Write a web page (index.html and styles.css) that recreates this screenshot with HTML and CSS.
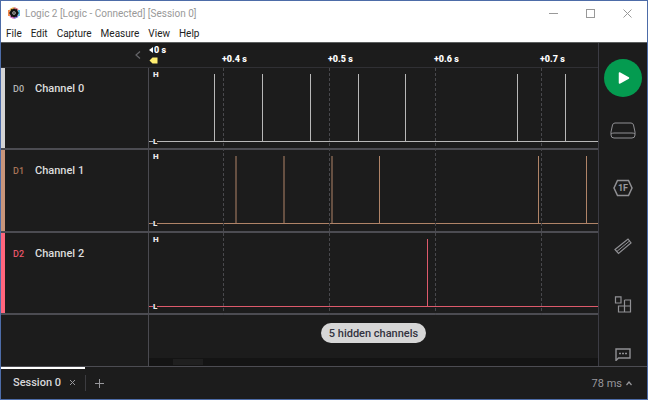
FILE: index.html
```html
<!DOCTYPE html>
<html lang="en">
<head>
    <meta charset="utf-8">
    <title>Logic 2 [Logic - Connected] [Session 0]</title>
    <link rel="stylesheet" href="styles.css">
</head>
<body>
    <div class="window">
        <header class="titlebar">
            <svg class="logo" width="12" height="12" viewBox="0 0 12 12">
                <g fill="none" stroke-width="2">
                    <path d="M2 3 L6 1" stroke="#e8b04a"/>
                    <path d="M6 1 L10 3" stroke="#d8707a"/>
                    <path d="M11 3 V9" stroke="#5ab8e0"/>
                    <path d="M10 9 L6 11" stroke="#7a6ad0"/>
                    <path d="M6 11 L2 9" stroke="#d06ab8"/>
                    <path d="M1 9 V3" stroke="#f08a50"/>
                </g>
                <path d="M6 1 L7 3 L9 2 L9 4 L11 6 L9 8 L9 10 L7 9 L6 11 L5 9 L3 10 L3 8 L1 6 L3 4 L3 2 L5 3 Z" fill="#111"/>
                <circle cx="6" cy="6" r="4" fill="#111"/>
                <circle cx="6" cy="6" r="1.500" fill="#555" stroke="#ccc" stroke-width="0.600"/>
            </svg>
            <h1 class="title">Logic 2 [Logic - Connected] [Session 0]</h1>
            <div class="window-buttons">
                <button type="button" aria-label="Minimize"><svg width="9" height="9"><path d="M0 4.500 H9"/></svg></button>
                <button type="button" aria-label="Maximize"><svg width="9" height="9"><rect x="0.500" y="0.500" width="8" height="8"/></svg></button>
                <button type="button" aria-label="Close"><svg width="9" height="9"><path d="M0.500 0.500 L8.500 8.500 M8.500 0.500 L0.500 8.500"/></svg></button>
            </div>
        </header>

        <nav class="menu">
            <button type="button">File</button>
            <button type="button">Edit</button>
            <button type="button">Capture</button>
            <button type="button">Measure</button>
            <button type="button">View</button>
            <button type="button">Help</button>
        </nav>

        <main class="workspace">
            <section class="capture">
                <div class="ruler">
                    <div class="ruler-side">
                        <button type="button" class="collapse" aria-label="Collapse">
                            <svg width="6" height="8"><path d="M5 0.500 L1 4 L5 7.500" fill="none" stroke="#66666a" stroke-width="1.200"/></svg>
                        </button>
                    </div>
                    <div class="timeline">
                        <div class="origin">
                            <span class="origin-label"><svg width="4" height="6"><path d="M4 0 V6 L0 3 Z" fill="#fff"/></svg>0 s</span>
                            <svg width="9" height="7"><path d="M3.500 0.500 H8.500 V6.500 H3.500 L0.500 3.500 Z" fill="#ffee70"/></svg>
                        </div>
                        <!-- one label per 100 ms -->
                        <div class="ticks">
                            <span>+0.4 s</span>
                            <span>+0.5 s</span>
                            <span>+0.6 s</span>
                            <span>+0.7 s</span>
                        </div>
                    </div>
                </div>

                <div class="channels">
                    <div class="channel white">
                        <div class="channel-label"><span class="pin">D0</span><span class="name">Channel 0</span></div>
                        <div class="lane">
                            <svg class="wave">
                                <path d="M0 73.500 H4000"/>
                                <path d="M65.500 6 V73 M113.500 6 V73 M161.500 6 V73 M209.500 6 V73 M256.500 6 V73 M368.500 6 V73 M416.500 6 V73"/>
                            </svg>
                            <span class="level high">H</span>
                            <span class="level low">L</span>
                        </div>
                    </div>
                    <div class="channel brown">
                        <div class="channel-label"><span class="pin">D1</span><span class="name">Channel 1</span></div>
                        <div class="lane">
                            <svg class="wave">
                                <path d="M0 73.500 H4000"/>
                                <path d="M87 6 V73 M135 6 V73 M183 6 V73 M230.500 6 V73 M389.500 6 V73 M437.500 6 V73"/>
                            </svg>
                            <span class="level high">H</span>
                            <span class="level low">L</span>
                        </div>
                    </div>
                    <div class="channel red">
                        <div class="channel-label"><span class="pin">D2</span><span class="name">Channel 2</span></div>
                        <div class="lane">
                            <svg class="wave">
                                <path d="M0 73.500 H4000"/>
                                <path d="M278.500 6 V73"/>
                            </svg>
                            <span class="level high">H</span>
                            <span class="level low">L</span>
                        </div>
                    </div>
                    <svg class="gridlines">
                        <path d="M74.500 0 V4000 M180.500 0 V4000 M286.500 0 V4000 M392.500 0 V4000"/>
                    </svg>
                </div>

                <div class="below">
                    <div class="below-side"></div>
                    <div class="below-main">
                        <button type="button" class="hidden-channels">5 hidden channels</button>
                        <div class="scrollbar"><div class="thumb"></div></div>
                    </div>
                </div>
            </section>

            <aside class="tools">
                <button type="button" class="play" aria-label="Start capture">
                    <svg width="14" height="14"><path d="M3.500 2 L12.500 7 L3.500 12 Z" fill="#fff" stroke="#fff" stroke-width="1.500" stroke-linejoin="round"/></svg>
                </button>
                <button type="button" class="tool" aria-label="Device">
                    <svg width="26" height="17" viewBox="0 0 26 17">
                        <path d="M5 1 H21 Q23 1 23.500 3 L25 10 V13 Q25 16 22 16 H4 Q1 16 1 13 V10 L2.500 3 Q3 1 5 1 Z"/>
                        <path d="M1 12 Q2 11 4 11 H22 Q24 11 25 12"/>
                    </svg>
                </button>
                <button type="button" class="tool" aria-label="Analyzers">
                    <svg width="20" height="18" viewBox="0 0 20 18">
                        <path d="M4.500 1.500 H15.500 L19 9 L15.500 16.500 H4.500 L1 9 Z" stroke-width="1.500"/>
                        <text x="10" y="12" text-anchor="middle">1F</text>
                    </svg>
                </button>
                <button type="button" class="tool" aria-label="Measurements">
                    <svg width="18" height="17" viewBox="0 0 18 17">
                        <path d="M1 11.500 L14 1 L17 5 L4.500 15.500 Z" stroke-width="1.200"/>
                        <path d="M2.800 13.500 L15.500 3"/>
                    </svg>
                </button>
                <button type="button" class="tool" aria-label="Extensions">
                    <svg width="18" height="17" viewBox="0 0 18 17">
                        <path d="M1.500 0.800 H7 V7 H1.500 Z M10.500 4 H16.500 V16 H4.500 V10 H16.500 M10.500 4 V16 M16.500 3.500 V16" stroke-width="1.200"/>
                    </svg>
                </button>
                <button type="button" class="tool last" aria-label="Feedback">
                    <svg width="16" height="13" viewBox="0 0 16 13">
                        <path d="M1 12.500 V1 H15 V10 H3.500 Z" stroke-width="1.400"/>
                        <path d="M4 5.500 H6 M7 5.500 H9 M10 5.500 H12" stroke-width="1.400"/>
                    </svg>
                </button>
            </aside>
        </main>

        <footer class="tabs">
            <div class="tab">
                <span>Session 0</span>
                <button type="button" class="close" aria-label="Close session">
                    <svg width="5" height="5"><path d="M0 0 L5 5 M5 0 L0 5" stroke="#98989c"/></svg>
                </button>
            </div>
            <div class="divider"></div>
            <button type="button" class="add" aria-label="New session">
                <svg width="9" height="9"><path d="M4.500 0 V9 M0 4.500 H9" stroke="#98989c"/></svg>
            </button>
            <button type="button" class="latency">78 ms
                <svg width="6" height="5"><path d="M0.500 4 L3 1 L5.500 4" fill="none" stroke="#98989c" stroke-width="1.200"/></svg>
            </button>
        </footer>
    </div>
</body>
</html>
```

FILE: styles.css
```css
* {
    box-sizing: border-box;
}

body {
    margin: 0;
    font-family: Roboto, "Liberation Sans", sans-serif;
    font-size: 11px;
    color: #d8d8da;
    background-color: #1c1c1c;
}

button {
    margin: 0;
    padding: 0;
    border: none;
    background: none;
    font: inherit;
    color: inherit;
}

svg {
    display: block;
}

.window {
    display: flex;
    flex-direction: column;
    height: 100vh;
    border: 1px solid #4d6ca8;
    overflow: hidden;
}

/* title bar and menu */
.titlebar {
    display: flex;
    align-items: center;
    height: 24px;
    padding-left: 7px;
    background-color: #fff;
}

.title {
    margin: 0 0 0 5px;
    font-size: 10px;
    font-weight: normal;
    color: #999;
}

.window-buttons {
    display: flex;
    margin-left: auto;
    padding-right: 1px;
}

.window-buttons button {
    display: flex;
    align-items: center;
    justify-content: center;
    width: 37px;
    height: 24px;
}

.window-buttons path,
.window-buttons rect {
    fill: none;
    stroke: #999;
}

.menu {
    display: flex;
    gap: 9px;
    height: 18px;
    padding-left: 5px;
    background-color: #fff;
    border-bottom: 1px solid #5c5f5f;
    font-size: 10px;
    color: #222;
}

/* capture area */
.workspace {
    display: flex;
    flex: 1;
    min-height: 0;
}

.capture {
    display: flex;
    flex-direction: column;
    flex: 1;
    min-width: 0;
}

.ruler {
    display: flex;
    height: 25px;
    border-bottom: 1px solid #303034;
}

.ruler-side {
    display: flex;
    flex: none;
    justify-content: flex-end;
    align-items: center;
    width: 148px;
    padding-right: 8px;
}

.timeline {
    display: flex;
    flex: 1;
    min-width: 0;
    overflow: hidden;
    font-size: 9px;
    font-weight: 900;
    line-height: 10px;
    color: #fff;
}

.origin {
    display: flex;
    flex: none;
    flex-direction: column;
    gap: 2px;
    width: 73px;
    padding-top: 2px;
}

.origin-label {
    display: flex;
    align-items: center;
    gap: 1px;
}

.ticks {
    display: flex;
    padding-top: 11px;
}

.ticks span {
    flex: none;
    width: 106px;
}

.channels {
    position: relative;
    display: grid;
    grid-template-rows: repeat(3, 1fr);
    flex: 1;
    min-height: 0;
    overflow: hidden;
}

.channel {
    display: flex;
    min-height: 0;
    border-bottom: 2px solid #4c4c52;
}

.channel-label {
    display: flex;
    align-items: flex-start;
    width: 148px;
    padding: 14px 0 0 8px;
    border-left: 4px solid;
    border-right: 1px solid #4a4a50;
    line-height: 14px;
}

.pin {
    width: 22px;
    font-size: 9px;
    font-weight: 500;
}

.name {
    font-weight: 500;
    color: #dcdcde;
}

.white .channel-label {
    border-left-color: #d4d4d4;
    color: #b4b4b4;
}

.brown .channel-label {
    border-left-color: #c8957a;
    color: #a87458;
}

.red .channel-label {
    border-left-color: #ff667c;
    color: #e8566a;
}

.lane {
    position: relative;
    flex: 1;
    min-width: 0;
}

.wave {
    width: 100%;
    height: 100%;
    fill: none;
    stroke: #b8b8b8;
}

.brown .wave {
    stroke: #b08468;
}

.red .wave {
    stroke: #dd5a6b;
}

.level {
    position: absolute;
    left: 4px;
    font-size: 8px;
    font-weight: 900;
    line-height: 8px;
    color: #e8e8e8;
    background-color: #1c1c1c;
}

.high {
    top: 3px;
}

.low {
    top: 70px;
}

.gridlines {
    position: absolute;
    top: 0;
    left: 148px;
    width: calc(100% - 148px);
    height: 100%;
    fill: none;
    stroke: #48484c;
    stroke-dasharray: 3 2;
}

.below {
    display: flex;
    height: 51px;
}

.below-side {
    width: 148px;
    border-right: 1px solid #4a4a50;
}

.below-main {
    display: flex;
    flex-direction: column;
    align-items: center;
    justify-content: space-between;
    flex: 1;
    padding-top: 8px;
}

.hidden-channels {
    height: 20px;
    padding: 0 8px;
    border-radius: 10px;
    background-color: #d6d6d6;
    color: #333340;
    font-weight: 500;
}

.scrollbar {
    align-self: stretch;
    height: 8px;
    padding: 1px 0 1px 24px;
    background-color: #141414;
}

.thumb {
    width: 7%;
    height: 6px;
    background-color: #1f1f1f;
}

/* right toolbar */
.tools {
    display: flex;
    flex-direction: column;
    align-items: center;
    width: 49px;
    padding-top: 16px;
    border-left: 1px solid #3c3c44;
}

.play {
    display: flex;
    align-items: center;
    justify-content: center;
    width: 38px;
    height: 38px;
    margin-bottom: 4px;
    border-radius: 50%;
    background-color: #049b50;
}

.tool {
    display: flex;
    align-items: center;
    justify-content: center;
    width: 100%;
    height: 58px;
    fill: none;
    stroke: #909094;
}

.tool text {
    fill: #98989c;
    stroke: none;
    font-size: 9px;
    font-weight: 700;
}

.last {
    flex: 1;
    align-items: flex-end;
    padding-bottom: 5px;
}

/* session tabs */
.tabs {
    display: flex;
    align-items: center;
    height: 33px;
    border-top: 1px solid #4c4c52;
}

.tab {
    display: flex;
    align-items: center;
    gap: 9px;
    height: 32px;
    padding: 0 10px 3px 12px;
    border-top: 2px solid #fff;
    font-weight: 500;
}

.divider {
    width: 1px;
    height: 16px;
    background-color: #3c3c40;
}

.add {
    margin-left: 9px;
}

.latency {
    display: flex;
    align-items: center;
    gap: 4px;
    margin-left: auto;
    padding-right: 15px;
    color: #98989c;
}
```
